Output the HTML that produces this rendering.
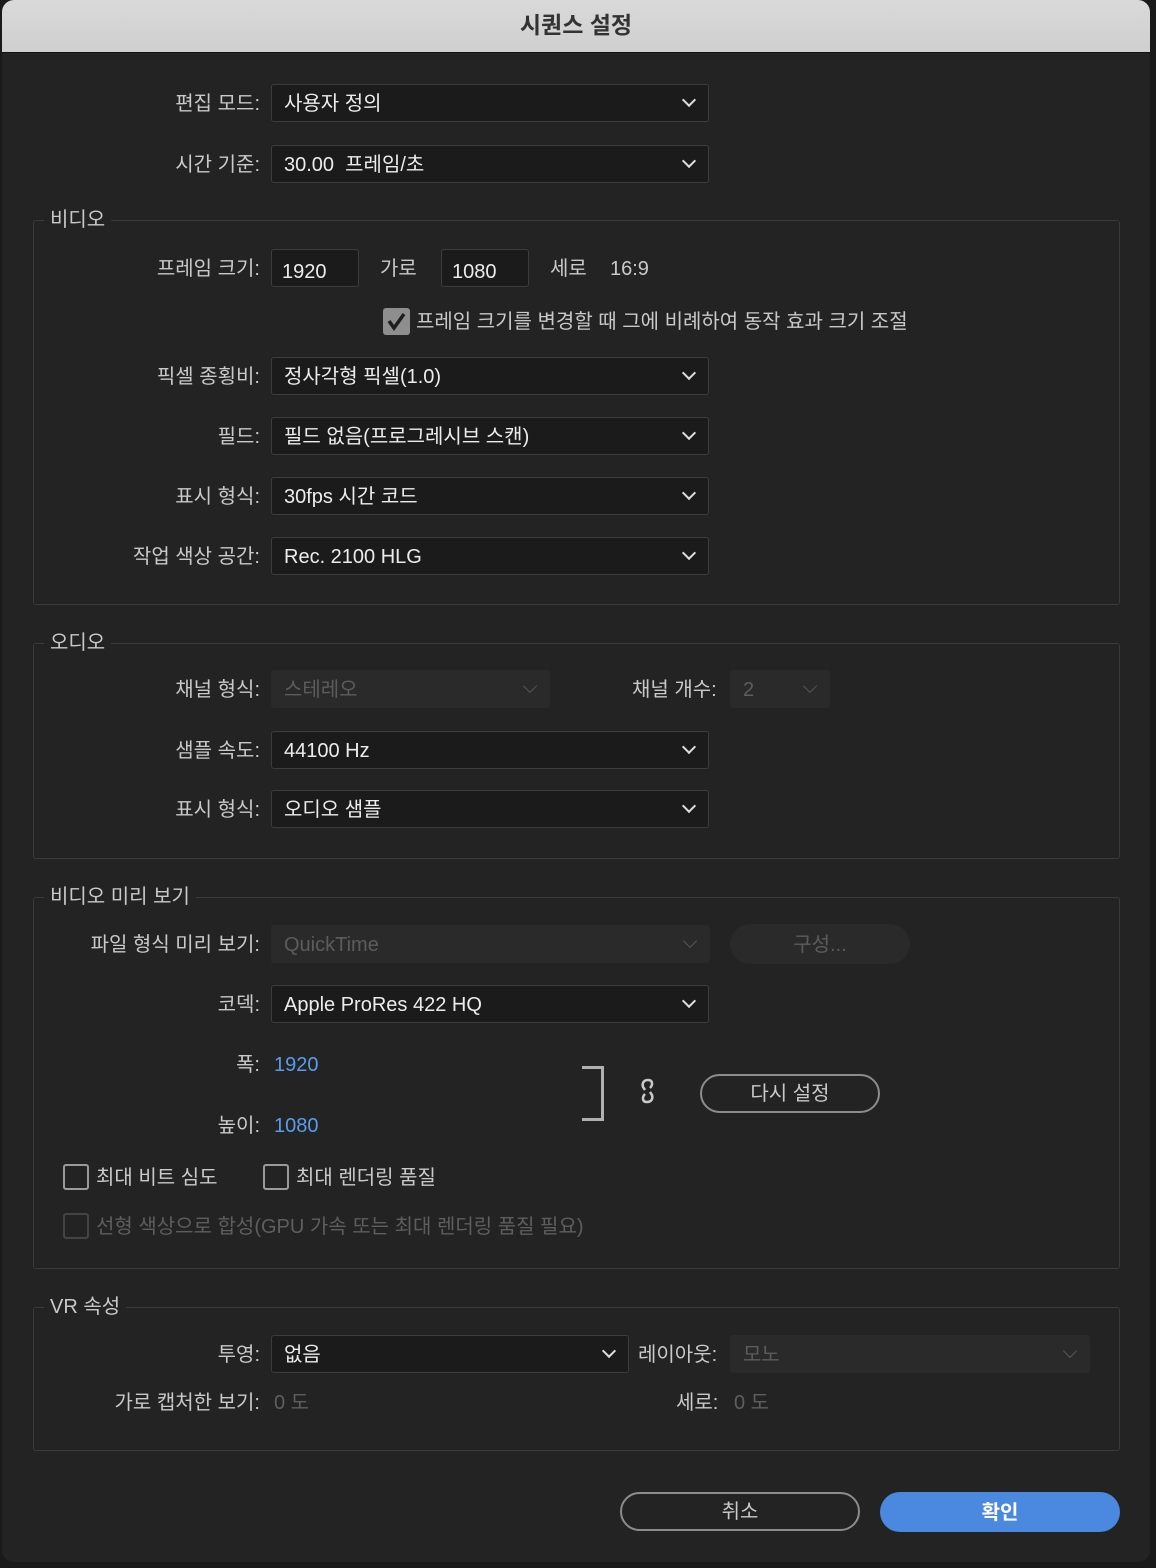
<!DOCTYPE html>
<html><head><meta charset="utf-8"><style>
*{box-sizing:border-box;margin:0;padding:0}
body{width:1156px;height:1568px;background:#1a1a1a;position:relative;overflow:hidden;font-family:"Liberation Sans","Noto Sans CJK KR",sans-serif;font-size:20px;color:#c9c9c9}
.dlg{position:absolute;left:2px;top:0;width:1148px;height:1562px;background:#232323;border-radius:12px;overflow:hidden}
.title{position:absolute;left:0;top:0;width:100%;height:53px;background:linear-gradient(#d9d9d9,#cfcfcf);border-bottom:1px solid #111;text-align:center;line-height:50px;font-weight:bold;color:#333;font-size:23px}
.wrap{position:absolute;left:0;top:0;width:1156px;height:1568px}
.a{position:absolute;white-space:nowrap}
.lab{position:absolute;right:896px;text-align:right;white-space:nowrap;line-height:41px;height:38px}
.sel{position:absolute;height:38px;background:#1b1b1b;border:1.5px solid #3c3c3c;border-radius:3px;color:#ececec;padding-left:12px;line-height:38px;white-space:nowrap}
.sel.dis{background:#2a2a2a;border-color:#2a2a2a;color:#5c5c5c}
.chev{position:absolute;right:14px;top:10px;width:10px;height:10px;border-right:2px solid #ddd;border-bottom:2px solid #ddd;transform:rotate(45deg);}
.dis .chev{border-color:#555;border-width:1.5px}
.fs{position:absolute;left:33px;width:1087px;border:1.5px solid #3a3a3a;border-radius:3px}
.leg{position:absolute;left:44px;background:#232323;padding:0 6px;line-height:28px;color:#c9c9c9;white-space:nowrap}
.box{position:absolute;width:26px;height:26px;border:2px solid #9a9a9a;border-radius:3px}
.btn{position:absolute;height:39px;border:2.5px solid #8c8c8c;border-radius:20px;text-align:center;line-height:36px;color:#c9c9c9;white-space:nowrap}
.blue{color:#5a9ce8}
.t{line-height:41px}
</style></head><body>
<div class="dlg">
<div class="title">시퀀스 설정</div>
</div>
<div class="wrap">
<div class="lab" style="top:84px">편집 모드:</div>
<div class="sel" style="left:271px;top:84px;width:438px">사용자 정의<div class="chev"></div></div>
<div class="lab" style="top:145px">시간 기준:</div>
<div class="sel" style="left:271px;top:145px;width:438px">30.00&nbsp; 프레임/초<div class="chev"></div></div>

<div class="fs" style="top:220px;height:385px"></div>
<div class="leg" style="top:206px">비디오</div>
<div class="lab" style="top:249px">프레임 크기:</div>
<div class="sel" style="left:271px;top:249px;width:88px;line-height:45px;padding-left:10px">1920</div>
<div class="a t" style="left:380px;top:249px">가로</div>
<div class="sel" style="left:441px;top:249px;width:88px;line-height:45px;padding-left:10px">1080</div>
<div class="a t" style="left:550px;top:249px">세로</div>
<div class="a t" style="left:610px;top:249px">16:9</div>
<div class="a" style="left:383px;top:308px;width:27px;height:27px;background:#8e8e8e;border-radius:3px"><svg width="27" height="27"><path d="M6 13 L11 20 L21 6" stroke="#1e1e1e" stroke-width="3.5" fill="none"/></svg></div>
<div class="a t" style="left:416px;top:302px">프레임 크기를 변경할 때 그에 비례하여 동작 효과 크기 조절</div>
<div class="lab" style="top:357px">픽셀 종횡비:</div>
<div class="sel" style="left:271px;top:357px;width:438px">정사각형 픽셀(1.0)<div class="chev"></div></div>
<div class="lab" style="top:417px">필드:</div>
<div class="sel" style="left:271px;top:417px;width:438px">필드 없음(프로그레시브 스캔)<div class="chev"></div></div>
<div class="lab" style="top:477px">표시 형식:</div>
<div class="sel" style="left:271px;top:477px;width:438px">30fps 시간 코드<div class="chev"></div></div>
<div class="lab" style="top:537px">작업 색상 공간:</div>
<div class="sel" style="left:271px;top:537px;width:438px">Rec. 2100 HLG<div class="chev"></div></div>

<div class="fs" style="top:643px;height:216px"></div>
<div class="leg" style="top:629px">오디오</div>
<div class="lab" style="top:670px">채널 형식:</div>
<div class="sel dis" style="left:271px;top:670px;width:279px">스테레오<div class="chev"></div></div>
<div class="a t" style="left:632px;top:670px">채널 개수:</div>
<div class="sel dis" style="left:730px;top:670px;width:100px">2<div class="chev"></div></div>
<div class="lab" style="top:731px">샘플 속도:</div>
<div class="sel" style="left:271px;top:731px;width:438px">44100 Hz<div class="chev"></div></div>
<div class="lab" style="top:790px">표시 형식:</div>
<div class="sel" style="left:271px;top:790px;width:438px">오디오 샘플<div class="chev"></div></div>

<div class="fs" style="top:897px;height:372px"></div>
<div class="leg" style="top:883px">비디오 미리 보기</div>
<div class="lab" style="top:925px">파일 형식 미리 보기:</div>
<div class="sel dis" style="left:271px;top:925px;width:439px">QuickTime<div class="chev"></div></div>
<div class="a" style="left:730px;top:924px;width:180px;height:40px;background:#2a2a2a;border-radius:20px;text-align:center;line-height:42px;color:#5c5c5c">구성...</div>
<div class="lab" style="top:985px">코덱:</div>
<div class="sel" style="left:271px;top:985px;width:438px">Apple ProRes 422 HQ<div class="chev"></div></div>
<div class="lab" style="top:1045px">폭:</div>
<div class="a blue t" style="left:274px;top:1045px">1920</div>
<div class="lab" style="top:1106px">높이:</div>
<div class="a blue t" style="left:274px;top:1106px">1080</div>
<div class="a" style="left:582px;top:1066px;width:22px;height:55px;border:3px solid #b0b0b0;border-left:none"></div>
<svg class="a" style="left:638px;top:1076px" width="20" height="30"><path d="M10 4 C5 4 4 8 5 11 L7 14 M10 4 C15 4 15 9 12 12 M9 26 C14 26 15 22 14 19 L12 16 M9 26 C4 26 4 21 7 18" stroke="#c9c9c9" stroke-width="2.5" fill="none"/></svg>
<div class="btn" style="left:700px;top:1074px;width:180px">다시 설정</div>
<div class="box" style="left:63px;top:1164px"></div>
<div class="a t" style="left:96px;top:1158px">최대 비트 심도</div>
<div class="box" style="left:263px;top:1164px"></div>
<div class="a t" style="left:296px;top:1158px">최대 렌더링 품질</div>
<div class="box" style="left:63px;top:1213px;border-color:#444"></div>
<div class="a t" style="left:96px;top:1207px;color:#5e5e5e">선형 색상으로 합성(GPU 가속 또는 최대 렌더링 품질 필요)</div>

<div class="fs" style="top:1307px;height:144px"></div>
<div class="leg" style="top:1293px">VR 속성</div>
<div class="lab" style="top:1335px">투영:</div>
<div class="sel" style="left:271px;top:1335px;width:358px">없음<div class="chev"></div></div>
<div class="a t" style="left:638px;top:1335px">레이아웃:</div>
<div class="sel dis" style="left:730px;top:1335px;width:360px">모노<div class="chev"></div></div>
<div class="lab" style="top:1383px">가로 캡처한 보기:</div>
<div class="a t" style="left:274px;top:1383px;color:#5e5e5e">0 도</div>
<div class="a t" style="left:676px;top:1383px">세로:</div>
<div class="a t" style="left:734px;top:1383px;color:#5e5e5e">0 도</div>

<div class="btn" style="left:620px;top:1492px;width:240px">취소</div>
<div class="a" style="left:880px;top:1492px;width:240px;height:40px;background:#4b89e1;border-radius:20px;text-align:center;line-height:42px;color:#fff;font-weight:bold">확인</div>
</div>
</body></html>
